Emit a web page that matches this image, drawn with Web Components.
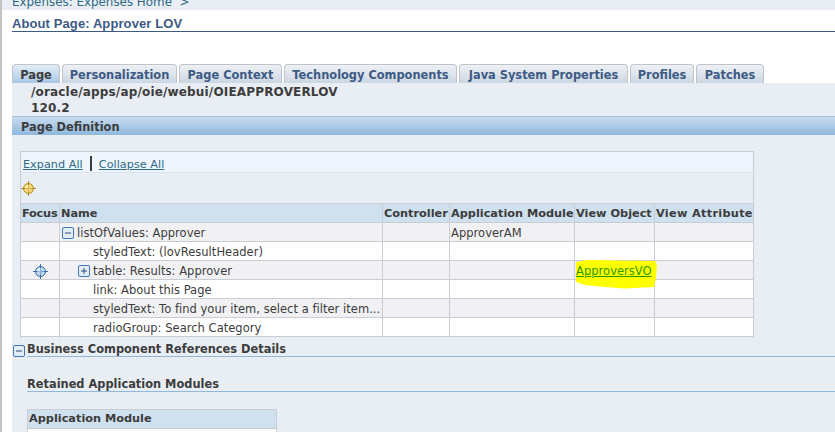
<!DOCTYPE html>
<html><head><meta charset="utf-8"><style>
html,body{margin:0;padding:0;background:#fff;overflow:hidden;height:432px}
body{font-family:"DejaVu Sans",sans-serif;color:#3c3c3c}
</style></head><body>
<about-page>
<tab-bar>
<tab-item active>Page</tab-item><tab-item w="115">Personalization</tab-item><tab-item w="103">Page Context</tab-item><tab-item w="173">Technology Components</tab-item><tab-item w="169">Java System Properties</tab-item><tab-item w="64">Profiles</tab-item><tab-item w="68">Patches</tab-item>
</tab-bar>
<page-panel></page-panel>
</about-page>
<script>
const sym=(s)=>`<svg width="12" height="12" viewBox="0 0 12 12"><rect x=".5" y=".5" width="11" height="11" rx="1.5" fill="#e3edf7" stroke="#3c78b4"/><path d="M3 6h6${s?'M6 3v6':''}" stroke="#2a4a78" stroke-width="1" fill="none"/></svg>`;
const target=(fill,stroke,hi)=>`<svg width="15" height="15" viewBox="0 0 15 15"><circle cx="7.5" cy="7.5" r="5" fill="${fill}" stroke="${stroke}"/><circle cx="6" cy="6" r="1.8" fill="${hi}"/><path d="M7.5 3v9M3 7.5h9" stroke="${stroke}" stroke-width="1" opacity=".45"/><path d="M7.5 0v4M7.5 11v4M0 7.5h4M11 7.5h4" stroke="${stroke}" stroke-width="1"/></svg>`;
class Base extends HTMLElement{render(h){this.attachShadow({mode:'open'}).innerHTML=h}}
customElements.define('about-page',class extends Base{connectedCallback(){this.render(`<style>
:host{display:block;width:835px;height:432px;overflow:hidden;border-left:2px solid #c4c4c4;box-sizing:border-box}
.crumb{height:10px;background:#e9eef5;overflow:hidden;padding-left:10px;font:11.9px/1 "DejaVu Sans",sans-serif;color:#2f6a85}
.crumb span{display:block;margin-top:-3px;white-space:pre}
.main{margin-left:10px}
h1{margin:7px 0 0;height:14px;border-bottom:1px solid #3d5a85;font:bold 13px/14px "Liberation Sans",sans-serif;color:#3d5a85;letter-spacing:.1px}
.gap{height:32px}
</style><div class="crumb"><span>Expenses: Expenses Home  &gt;</span></div><div class="main"><h1>About Page: Approver LOV</h1><div class="gap"></div><slot></slot></div>`)}});
customElements.define('tab-bar',class extends Base{connectedCallback(){this.render(`<style>:host{display:flex;gap:2px;height:19px}</style><slot></slot>`)}});
customElements.define('tab-item',class extends Base{connectedCallback(){const a=this.hasAttribute('active');this.render(`<style>
:host{display:block;box-sizing:border-box;height:19px;width:${this.getAttribute('w')||48}px;text-align:center;border:1px solid #c0c4c8;border-bottom:0;border-radius:4px 4px 0 0;white-space:nowrap;
font:bold 11.4px/20px "DejaVu Sans",sans-serif;color:${a?'#3c3c3c':'#3d5a85'};background:${a?'linear-gradient(#e4edf6,#a9c8e4)':'linear-gradient(#eef1f5,#ccd7e2)'}}
</style><slot></slot>`)}});
customElements.define('section-head',class extends Base{connectedCallback(){this.render(`<style>
:host{display:block;border-bottom:1px solid #8fb8dc;font:bold 11.4px/14px "DejaVu Sans",sans-serif;color:#3c3c3c;height:14px}
</style><slot></slot>`)}});
customElements.define('tree-row',class extends Base{connectedCallback(){
 const c=this.dataset, alt=this.hasAttribute('alt');
 this.render(`<style>
:host{display:grid;grid-template-columns:39px 323px 67px 125px 80px 100px;height:19px;box-sizing:border-box;background:${alt?'#f1f1f4':'#fff'};border-bottom:1px solid #c8ccd4;font:11.5px/20px "DejaVu Sans",sans-serif;color:#3c3c3c;letter-spacing:.03px}
div{border-left:1px solid #c8ccd4;box-sizing:border-box;white-space:nowrap;overflow:visible;position:relative}
div:last-child{border-right:1px solid #c8ccd4}
.f{display:flex;align-items:center;justify-content:center}
.n{display:flex;align-items:center;padding-left:${c.ind||33}px;gap:3px}
.n svg{flex:none}
.am,.vo{padding-left:1px}
.hl{position:absolute;left:0;top:-1px;width:83px;height:29px;z-index:1}
a{position:relative;z-index:2;color:#2d9a00;text-decoration:underline}
</style><div class="f">${c.focus?target('#bcd6ec','#3c6ea8','#e8f2fa'):''}</div><div class="n">${c.sym?sym(c.sym=='+'):''}<span>${c.name}</span></div><div></div><div class="am">${c.am||''}</div><div class="vo">${c.vo?`<svg class="hl" viewBox="0 0 83 29"><path d="M1 2 L12 0 L80 1 L82 5 L81 18 L79 27 L50 28.5 L30 27 L10 25 L1 22Z" fill="#ffff00"/></svg><a>${c.vo}</a>`:''}</div><div></div>`)}});
customElements.define('tree-table',class extends Base{connectedCallback(){this.render(`<style>
:host{display:block;width:734px;margin-left:8px;border-top:1px solid #c8ccd4;box-sizing:border-box}
.tb{height:21px;background:#eef5fc;border:1px solid #c8ccd4;border-width:0 1px;border-bottom:1px solid #dbe3ec;box-sizing:border-box;padding-left:2px;font:11.2px/25px "DejaVu Sans",sans-serif;letter-spacing:.05px}
.tb a{color:#2f6a85;text-decoration:underline}
.tb i{display:inline-block;width:2px;height:15px;background:#3c3c3c;margin:0 7px 0 7px;vertical-align:-3px}
.ic{height:30px;background:#e9eef5;border:1px solid #c8ccd4;border-width:0 1px;box-sizing:border-box;padding:8px 0 0 0}
.ic svg{display:block}
.hd{display:grid;grid-template-columns:39px 323px 67px 125px 80px 100px;height:20px;box-sizing:border-box;background:#cfe0ef;border-top:1px solid #c8ccd4;border-bottom:1px solid #c8ccd4;font:bold 11.3px/19px "DejaVu Sans",sans-serif;color:#3c3c3c}
.hd span{border-left:1px solid #c8ccd4;padding-left:1px;white-space:nowrap;overflow:hidden}
.hd span:first-child{letter-spacing:-.2px}
.hd span:last-child{border-right:1px solid #c8ccd4;letter-spacing:.3px}
</style><div class="tb"><a>Expand All</a><i></i><a>Collapse All</a></div><div class="ic">${target('#f5d878','#b08a20','#fff3c4')}</div>
<div class="hd"><span>Focus</span><span>Name</span><span>Controller</span><span>Application Module</span><span>View Object</span><span>View Attribute</span></div><slot></slot>`)}});
customElements.define('page-panel',class extends Base{connectedCallback(){this.render(`<style>
:host{display:block;background:#e9eef5;height:349px;overflow:hidden}
.meta{padding:1px 0 0 19px;font:bold 12px/16px "DejaVu Sans",sans-serif;height:33px;box-sizing:border-box;letter-spacing:.17px}
.bar{height:19px;box-sizing:border-box;background:linear-gradient(#c8dcef,#8fb8dc);border-top:1px solid #a0c0dc;padding-left:9px;font:bold 11.4px/20px "DejaVu Sans",sans-serif}
.sp{height:16px}
.biz{display:flex;align-items:flex-start;margin-top:5px;padding-left:1px}
.biz svg{margin:3px 2px 0 0}
.biz section-head{flex:1;margin:0}
.mod{margin:20px 0 0 15px}
table{border-collapse:collapse;margin:17px 0 0 15px;width:250px}
th{height:18px;padding:0 1px;text-align:left;background:#cfe0ef;border:1px solid #c8ccd4;font:bold 11.3px/18px "DejaVu Sans",sans-serif;color:#3c3c3c}
td{height:18px;background:#fff;border:1px solid #c8ccd4}
</style><div class="meta">/oracle/apps/ap/oie/webui/OIEAPPROVERLOV<br>120.2</div><div class="bar">Page Definition</div><div class="sp"></div>
<tree-table>
<tree-row alt data-ind="2" data-sym="-" data-name="listOfValues: Approver" data-am="ApproverAM"></tree-row>
<tree-row data-name="styledText: (lovResultHeader)"></tree-row>
<tree-row alt data-focus="1" data-ind="18" data-sym="+" data-name="table: Results: Approver" data-vo="ApproversVO"></tree-row>
<tree-row data-name="link: About this Page"></tree-row>
<tree-row alt data-name="styledText: To find your item, select a filter item..."></tree-row>
<tree-row data-name="radioGroup: Search Category"></tree-row>
</tree-table>
<div class="biz">${sym(false)}<section-head>Business Component References Details</section-head></div>
<section-head class="mod">Retained Application Modules</section-head>
<table><tr><th>Application Module</th></tr><tr><td></td></tr></table>`)}});
</script>
</body></html>
